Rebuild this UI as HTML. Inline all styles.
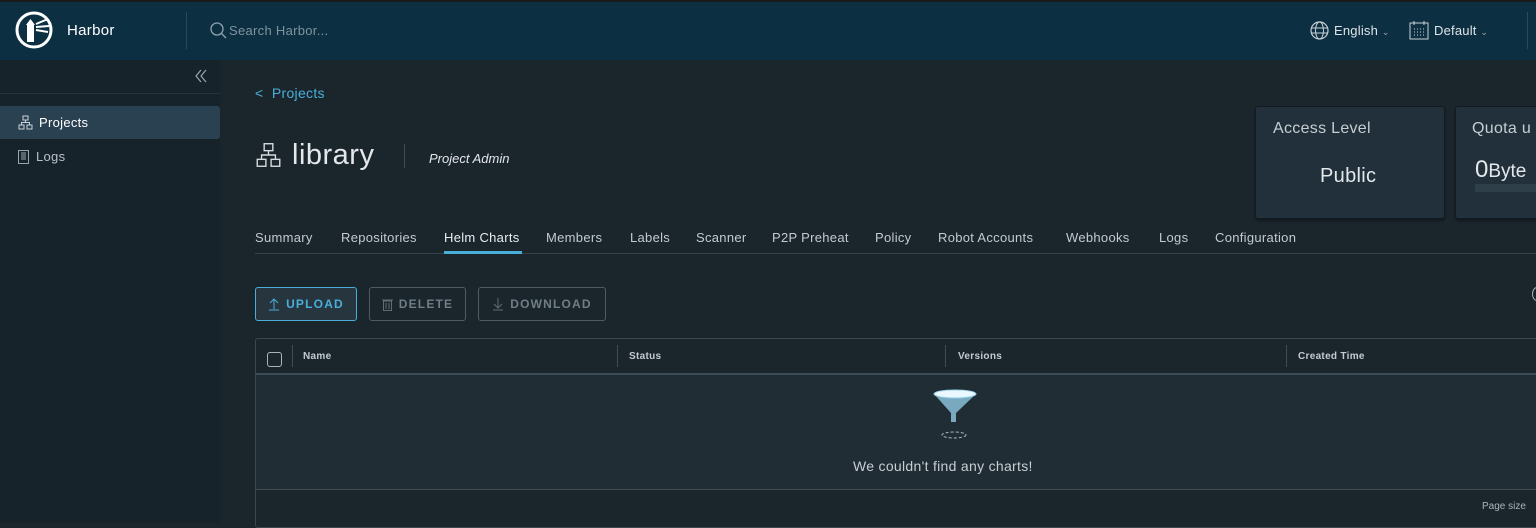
<!DOCTYPE html>
<html><head><style>
*{box-sizing:border-box;margin:0;padding:0}
body{width:1536px;height:523px;overflow:hidden;background:#1b252c;font-family:"Liberation Sans",sans-serif;color:#d6dbdf;position:relative}
.a{position:absolute}
.hdr{left:0;top:0;width:1536px;height:60px;background:#0c2f42;border-top:2px solid #1a1a1a}
.side{left:0;top:60px;width:220px;height:463px;background:#17232a}
.card{background:#21303a;border:1px solid #121b20;border-radius:3px;box-shadow:0 2px 2px #111a1f}
.tab{top:230px;font-size:13px;color:#c3cbd0;letter-spacing:.3px}
.btn{top:287px;height:34px;border:1px solid #4c5b64;border-radius:3px;font-size:12px;font-weight:bold;letter-spacing:1.2px;color:#6f7e87;display:flex;align-items:center;justify-content:center;gap:6px}
.th{top:351px;font-size:10px;font-weight:bold;color:#c4ccd2;letter-spacing:.3px}
.sep{width:1px;height:22px;background:#3e4c55;top:345px}
</style></head><body>
<div class="a hdr"></div>
<svg class="a" style="left:15px;top:11px" width="38" height="38" viewBox="0 0 38 38"><circle cx="19" cy="19" r="17" fill="none" stroke="#fff" stroke-width="3"/><rect x="12" y="14" width="7" height="17" fill="#fff"/><path d="M11 14 L15.5 8 L20 14Z" fill="#fff"/><path d="M21 13 L33 8 M21 16 L34 15 M21 19 L33 21" stroke="#fff" stroke-width="2"/></svg>
<div class="a" style="left:67px;top:22px;font-size:15px;color:#fff;letter-spacing:.3px">Harbor</div>
<div class="a" style="left:186px;top:12px;width:1px;height:37px;background:#2a4a5a"></div>
<svg class="a" style="left:210px;top:22px" width="18" height="18"><circle cx="7" cy="7" r="6" fill="none" stroke="#8fa3ae" stroke-width="1.3"/><path d="M11.5 11.5L16 16" stroke="#8fa3ae" stroke-width="1.3"/></svg>
<div class="a" style="left:229px;top:23px;font-size:13px;color:#7f939e;letter-spacing:.3px">Search Harbor...</div>
<svg class="a" style="left:1310px;top:21px" width="19" height="19"><circle cx="9.5" cy="9.5" r="8.5" fill="none" stroke="#c9d2d8" stroke-width="1.2"/><ellipse cx="9.5" cy="9.5" rx="4" ry="8.5" fill="none" stroke="#c9d2d8"/><path d="M1 7h17M1 12h17" stroke="#c9d2d8"/></svg>
<div class="a" style="left:1334px;top:23px;font-size:13px;color:#dfe5e8;letter-spacing:.2px">English <span style="font-size:9px;color:#9aa8b0">⌄</span></div>
<svg class="a" style="left:1409px;top:20px" width="20" height="20"><rect x="1" y="3" width="18" height="16" fill="none" stroke="#c9d2d8"/><path d="M5 1v4M15 1v4" stroke="#c9d2d8"/><path d="M5 9h10M5 12h10M5 15h10" stroke="#c9d2d8" stroke-dasharray="1 2"/></svg>
<div class="a" style="left:1434px;top:23px;font-size:13px;color:#dfe5e8;letter-spacing:.2px">Default <span style="font-size:9px;color:#9aa8b0">⌄</span></div>
<div class="a" style="left:1527px;top:12px;width:1px;height:37px;background:#2a4a5a"></div>
<div class="a side"></div>
<svg class="a" style="left:194px;top:69px" width="14" height="14"><path d="M7 1L2 7l5 6M12 1L7 7l5 6" fill="none" stroke="#9aa6ad" stroke-width="1.2"/></svg>
<div class="a" style="left:0;top:93px;width:220px;height:1px;background:#26333a"></div>
<div class="a" style="left:0;top:106px;width:220px;height:33px;background:#2a4152;border-radius:0 3px 3px 0"></div>
<svg class="a" style="left:18px;top:115px" width="15" height="15" viewBox="0 0 15 15" fill="none" stroke="#c9d2d8"><rect x="5" y="1" width="5" height="4"/><rect x="1" y="10" width="5" height="4"/><rect x="9" y="10" width="5" height="4"/><path d="M7.5 5v2.5M3.5 10V7.5h8V10"/></svg>
<div class="a" style="left:39px;top:115px;font-size:13px;color:#fff;letter-spacing:.3px">Projects</div>
<svg class="a" style="left:18px;top:150px" width="11" height="14"><rect x="0.5" y="0.5" width="10" height="13" fill="none" stroke="#9aa6ad"/><path d="M3 3h5M3 5h5M3 7h5M3 9h5" stroke="#9aa6ad"/></svg>
<div class="a" style="left:36px;top:149px;font-size:13px;color:#b7c1c7;letter-spacing:.3px">Logs</div>
<div class="a" style="left:255px;top:85px;font-size:14px;color:#49afd9;letter-spacing:.3px">&lt;&nbsp; Projects</div>
<svg class="a" style="left:255px;top:142px" width="27" height="26" viewBox="0 0 15 15" fill="none" stroke="#d6dbdf" stroke-width=".8"><rect x="5" y="1" width="5" height="4"/><rect x="1" y="10" width="5" height="4"/><rect x="9" y="10" width="5" height="4"/><path d="M7.5 5v2.5M3.5 10V7.5h8V10"/></svg>
<div class="a" style="left:292px;top:139px;font-size:29px;color:#e3e8eb;letter-spacing:.5px">library</div>
<div class="a" style="left:404px;top:144px;width:1px;height:24px;background:#3e4c55"></div>
<div class="a" style="left:429px;top:151px;font-size:13px;font-style:italic;color:#e3e8eb">Project Admin</div>
<div class="a card" style="left:1255px;top:106px;width:190px;height:113px"></div>
<div class="a" style="left:1273px;top:120px;font-size:16px;color:#c6ced3;letter-spacing:.3px">Access Level</div>
<div class="a" style="left:1320px;top:165px;font-size:20px;color:#e3e8eb;letter-spacing:.3px">Public</div>
<div class="a card" style="left:1455px;top:106px;width:110px;height:113px"></div>
<div class="a" style="left:1472px;top:120px;font-size:16px;color:#c6ced3;letter-spacing:.3px">Quota u</div>
<div class="a" style="left:1475px;top:156px;font-size:24px;color:#e3e8eb">0<span style="font-size:19px">Byte</span></div>
<div class="a" style="left:1475px;top:184px;width:70px;height:8px;background:#2e3f49"></div>
<div class="a tab" style="left:255px">Summary</div>
<div class="a tab" style="left:341px">Repositories</div>
<div class="a tab" style="left:444px;color:#e8edf0">Helm Charts</div>
<div class="a tab" style="left:546px">Members</div>
<div class="a tab" style="left:630px">Labels</div>
<div class="a tab" style="left:696px">Scanner</div>
<div class="a tab" style="left:772px">P2P Preheat</div>
<div class="a tab" style="left:875px">Policy</div>
<div class="a tab" style="left:938px">Robot Accounts</div>
<div class="a tab" style="left:1066px">Webhooks</div>
<div class="a tab" style="left:1159px">Logs</div>
<div class="a tab" style="left:1215px">Configuration</div>
<div class="a" style="left:255px;top:253px;width:1281px;height:1px;background:#34424b"></div>
<div class="a" style="left:444px;top:251px;width:78px;height:3px;background:#49afd9"></div>
<div class="a btn" style="left:255px;width:102px;border-color:#49afd9;color:#49afd9;background:#26353e">
<svg width="12" height="14"><path d="M6 12V2M2 6l4-4 4 4M1 13h10" stroke="#49afd9" fill="none"/></svg>UPLOAD</div>
<div class="a btn" style="left:369px;width:97px">
<svg width="11" height="13"><rect x="1.5" y="3" width="8" height="9.5" fill="none" stroke="#5f6d75"/><path d="M0 2h11M4 5v6M7 5v6" stroke="#5f6d75"/></svg>DELETE</div>
<div class="a btn" style="left:478px;width:128px">
<svg width="12" height="14"><path d="M6 1v10M2 7l4 4 4-4M1 13h10" stroke="#5f6d75" fill="none"/></svg>DOWNLOAD</div>
<div class="a" style="left:1532px;top:287px;width:10px;height:14px;border:1px solid #aab;border-radius:50%"></div>
<div class="a" style="left:255px;top:338px;width:1290px;height:190px;border:1px solid #3a4750;border-radius:3px"></div>
<div class="a" style="left:256px;top:373px;width:1290px;height:2px;background:#3e4c56"></div>
<div class="a" style="left:256px;top:375px;width:1290px;height:114px;background:#212d35"></div>
<div class="a" style="left:256px;top:489px;width:1290px;height:1px;background:#3e4c56"></div>
<div class="a" style="left:267px;top:352px;width:15px;height:15px;border:1px solid #aab4ba;border-radius:3px"></div>
<div class="a sep" style="left:292px"></div>
<div class="a sep" style="left:617px"></div>
<div class="a sep" style="left:945px"></div>
<div class="a sep" style="left:1286px"></div>
<div class="a th" style="left:303px">Name</div>
<div class="a th" style="left:629px">Status</div>
<div class="a th" style="left:958px">Versions</div>
<div class="a th" style="left:1298px">Created Time</div>
<svg class="a" style="left:932px;top:389px" width="46" height="52"><ellipse cx="23" cy="5" rx="21" ry="4" fill="#d8f0fa" stroke="#9fd3ea"/><path d="M2 5 L19 24 L19 33 L24 33 L24 24 L44 5Z" fill="#8fc8e2" opacity=".8"/><ellipse cx="23" cy="5" rx="20" ry="3.5" fill="#eaf8ff"/><ellipse cx="22" cy="46" rx="12" ry="3" fill="none" stroke="#aab6bd" stroke-dasharray="3 2"/></svg>
<div class="a" style="left:853px;top:458px;font-size:14px;color:#c6ced3;letter-spacing:.3px">We couldn't find any charts!</div>
<div class="a" style="left:1482px;top:501px;font-size:10px;color:#aab4ba">Page size</div>
</body></html>
